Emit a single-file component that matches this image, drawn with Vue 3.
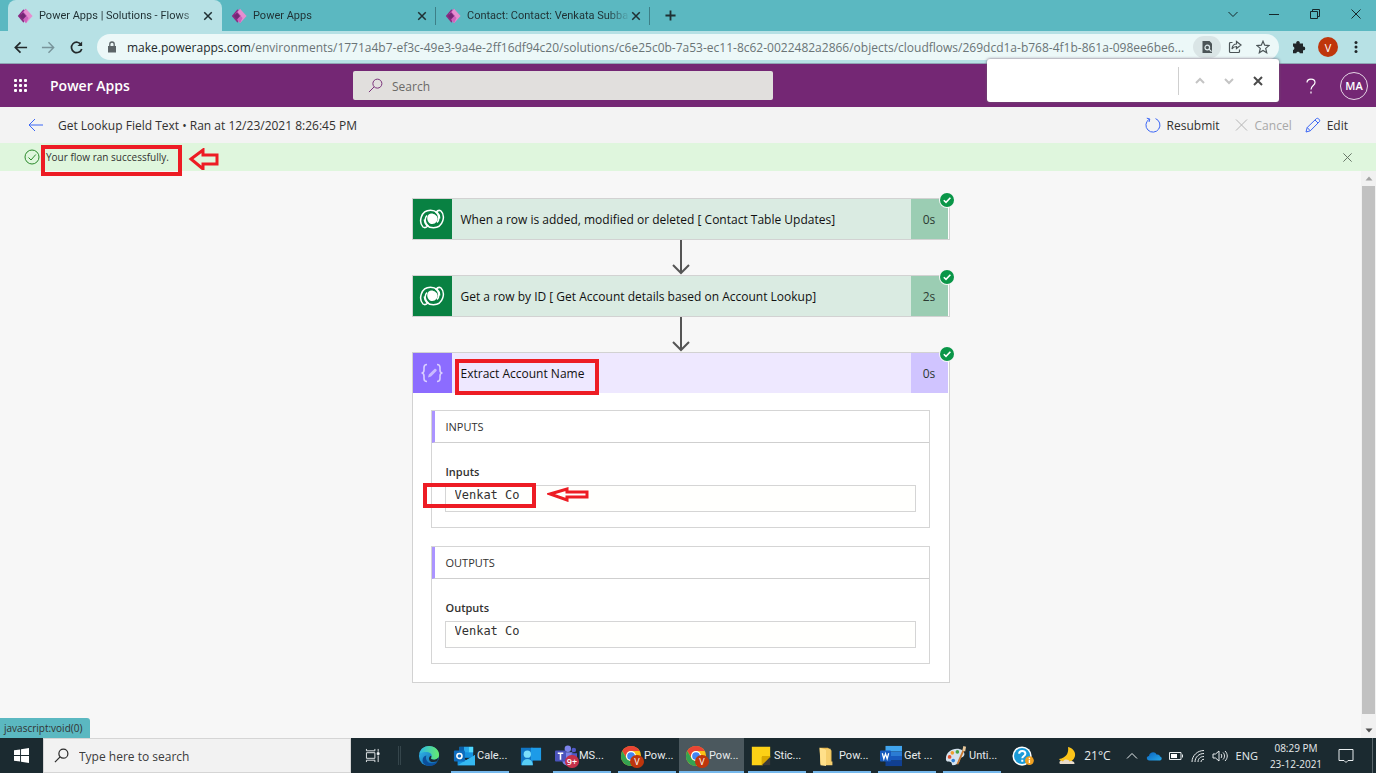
<script setup>
import { ref } from 'vue'

const tabs = [
    { title: 'Power Apps | Solutions - Flows', active: true },
    { title: 'Power Apps', active: false },
    { title: 'Contact: Contact: Venkata Subba', active: false }
]

const steps = [
    { title: 'When a row is added, modified or deleted [ Contact Table Updates]', time: '0s', kind: 'dataverse' },
    { title: 'Get a row by ID [ Get Account details based on Account Lookup]', time: '2s', kind: 'dataverse' },
    { title: 'Extract Account Name', time: '0s', kind: 'compose', open: true }
]

const panels = [
    { head: 'INPUTS', label: 'Inputs', id: 'inputs', value: ref('Venkat Co'), marked: true },
    { head: 'OUTPUTS', label: 'Outputs', id: 'outputs', value: ref('Venkat Co'), marked: false }
]

const apps = [
    { icon: 'edge', small: true },
    { icon: 'outlook', text: 'Cale...' },
    { icon: 'people', small: true },
    { icon: 'teams', text: 'MS...' },
    { icon: 'chrome', text: 'Pow...' },
    { icon: 'chrome', text: 'Pow...', active: true },
    { icon: 'sticky', text: 'Stic...' },
    { icon: 'folder', text: 'Pow...' },
    { icon: 'word', text: 'Get ...' },
    { icon: 'paint', text: 'Unti...' },
    { icon: 'help', small: true }
]

const search = ref('')
const find = ref('')
const taskSearch = ref('')
</script>

<template>
    <div class="screen">
        <svg class="sprite" aria-hidden="true">
            <defs>
                <linearGradient id="edgeA" x1="0" y1="0" x2="1" y2="1">
                    <stop offset="0" stop-color="#35c1f1" />
                    <stop offset="1" stop-color="#0c59a4" />
                </linearGradient>
                <linearGradient id="edgeB" x1="0" y1="0" x2="1" y2="0">
                    <stop offset="0" stop-color="#2cb8e6" />
                    <stop offset="1" stop-color="#66eb6e" />
                </linearGradient>
                <linearGradient id="cloudG" x1="0" y1="0" x2="1" y2="1">
                    <stop offset="0" stop-color="#0a64c0" />
                    <stop offset="1" stop-color="#28a8ea" />
                </linearGradient>
            </defs>
            <symbol id="powerapps" viewBox="0 0 16 16">
                <path d="M6.500 1.200L0.800 8l5.700 6.800L10 8z" fill="#8a2a83" />
                <path d="M8.500 0.800L4 6l4 4.500L11.500 5z" fill="#b94bb0" />
                <path d="M9 0.800L15.600 8 9 15.200 6.500 12 10 8 6.500 4z" fill="#e58fd0" />
                <path d="M8 6l3.500 4L9 15.200 5.500 10.500z" fill="#cf62bd" />
                <path d="M6 4.500L9.200 8 6 11.500 3 8z" fill="#742774" />
            </symbol>
            <symbol id="close" viewBox="0 0 16 16">
                <path d="M3 3l10 10M13 3L3 13" stroke="currentColor" fill="none" />
            </symbol>
            <symbol id="edge" viewBox="0 0 24 24">
                <circle cx="12" cy="12" r="11" fill="url(#edgeA)" />
                <path d="M1.500 9.500C3 4 7 1 12 1c6.500 0 11 4.500 11 9.500 0 3.500-2.600 5.500-5.500 5.500-2.200 0-3.500-.8-3.500-1.600 0-.6 1-.9 1-2.700C15 9.300 12.500 7.500 9 7.500c-3.200 0-5.800.7-7.500 2z" fill="url(#edgeB)" />
                <path d="M9.200 11.500c-1.700 4 1.300 8.500 6.300 8.500 2.400 0 4.500-.8 6-2-2 3.300-5.300 5-9 5C7.500 23 5 19.500 5 16.500c0-2.600 1.700-4.400 4.200-5z" fill="#0b4f9c" />
                <path d="M14 14.500c.3 1 1.600 1.500 3.500 1.500 1.800 0 3.600-.8 4.600-2.300-.2 1.800-.6 3-1.200 4.100-5 1.900-8.900.6-8.900-2.800 0-1.500.7-2.600 2-3.300 1.400 1 .1 2.100 0 2.800z" fill="#1c2b33" />
            </symbol>
            <symbol id="outlook" viewBox="0 0 24 24">
                <rect x="7" y="2" width="15" height="12" fill="#1490df" />
                <path d="M7 2h5v6H7z" fill="#0a5ea8" />
                <path d="M17 2h5v6h-5z" fill="#50d9ff" />
                <path d="M12 2h5v6h-5z" fill="#28a8ea" />
                <path d="M5 11l9.500 5.500L24 11v11H5z" fill="#1490df" />
                <path d="M5 22l19-11v11z" fill="#35b8f1" />
                <rect x="1" y="6" width="12" height="12" rx="1" fill="#0f6cbd" />
                <circle cx="7" cy="12" r="2.800" fill="none" stroke="#fff" stroke-width="1.700" />
            </symbol>
            <symbol id="people" viewBox="0 0 24 24">
                <path d="M1 3h13v19H1z" fill="#1176c4" />
                <path d="M12 3h11v14H12z" fill="#1d9be8" />
                <circle cx="8" cy="10" r="4" fill="#7ce0fb" />
                <path d="M2 22c0-9 12-9 12 0z" fill="#58cdf5" />
            </symbol>
            <symbol id="teams" viewBox="0 0 24 24">
                <circle cx="14" cy="4" r="3.500" fill="#7b83eb" />
                <circle cx="20.500" cy="5.500" r="2.500" fill="#5059c9" />
                <path d="M8 8h11v9c0 7-11 7-11 0z" fill="#7b83eb" />
                <path d="M18 9h6v7c0 4-6 4-6 0z" fill="#5059c9" />
                <rect x="0" y="6" width="12" height="12" rx="1" fill="#4b53bc" />
                <path d="M3 9h6M6 9v7" stroke="#fff" stroke-width="1.700" />
            </symbol>
            <symbol id="chrome" viewBox="0 0 24 24">
                <circle cx="12" cy="12" r="11" fill="#fbc116" />
                <path d="M2.500 6.500A11 11 0 0 1 21.500 6.500H12A5.500 5.500 0 0 0 7 14z" fill="#e94435" />
                <path d="M2.500 6.500A11 11 0 0 0 12 23l4.700-8.300A5.500 5.500 0 0 1 7.200 14.700z" fill="#34a351" />
                <circle cx="12" cy="12" r="5.500" fill="#fff" />
                <circle cx="12" cy="12" r="4.200" fill="#4285f4" />
            </symbol>
            <symbol id="sticky" viewBox="0 0 24 24">
                <path d="M2 2h20v12l-8 8H2z" fill="#fcd116" />
                <path d="M13 22v-9h9v9z" fill="#3b3a39" />
                <path d="M13 22l9-9v-1h-9z" fill="#d9a800" />
            </symbol>
            <symbol id="folder" viewBox="0 0 24 24">
                <path d="M5 3h9l4 3v15H6z" fill="#e9b94e" />
                <path d="M5 3l7 2v18l-6-1z" fill="#ffe08a" />
                <path d="M12 4h5v14h2v4h-7z" fill="#f6cf6e" />
            </symbol>
            <symbol id="word" viewBox="0 0 24 24">
                <path d="M6 1h18v6H6z" fill="#41a5ee" />
                <path d="M6 7h18v5H6z" fill="#2b7cd3" />
                <path d="M6 12h18v5H6z" fill="#185abd" />
                <path d="M6 17h18v6H6z" fill="#103f91" />
                <rect x="0" y="6" width="12" height="12" rx="1" fill="#185abd" />
                <path d="M2.500 9l1.700 6L6 9.500 7.800 15l1.700-6" stroke="#fff" stroke-width="1.400" fill="none" />
            </symbol>
            <symbol id="paint" viewBox="0 0 24 24">
                <path d="M1 15C1 8 7 4 13 4c5 0 9 3 8 7-.8 3-4 2-4.500 4.500C16 19 13 22 8.500 22c-1.500 0-.5-3-2.500-3.500S1 19 1 15z" fill="#d6e3ee" />
                <circle cx="5" cy="13" r="2" fill="#e2522f" />
                <circle cx="8" cy="8.500" r="2" fill="#f0a030" />
                <circle cx="13.500" cy="7.500" r="2" fill="#47a447" />
                <circle cx="9" cy="17" r="2" fill="#2f7fd6" />
                <path d="M21 4l-7.500 17" stroke="#c97a32" stroke-width="2" />
                <path d="M19 6l1-5 3 1-1 5z" fill="#e8c79b" />
            </symbol>
            <symbol id="help" viewBox="0 0 24 24">
                <circle cx="11" cy="12" r="10.500" fill="#fff" />
                <circle cx="11" cy="12" r="8.800" fill="#1a9ad7" />
                <path d="M7.800 9.500c0-4 6.800-4 6.800 0 0 2.500-3.400 2.500-3.400 5M11.200 16v2.300" stroke="#fff" stroke-width="2.200" fill="none" />
                <circle cx="19" cy="17" r="4.800" fill="#f0a020" />
                <path d="M19 14v1.300M19 16.200v3.300" stroke="#fff" stroke-width="1.500" />
            </symbol>
            <symbol id="dataverse" viewBox="0 0 26 20">
                <g fill="none" stroke="#fff" stroke-width="1.500">
                    <path id="swoosh" d="M8 6.500C5 9.500 6 14.500 9 16.800 7.500 18.500 5.500 19 4 18 -0.500 13.500 1.500 1.200 11.500 1.200 17 1.200 21 5 20.500 9.500" />
                    <use href="#swoosh" transform="rotate(180 13 10)" />
                </g>
                <path d="M8.300 8.500c.5-4.500 5-5 8.200-2.500 2.700 2 2.700 4.500 1.200 6.500-2 3-5.700 3.300-7.900 1-1.300-1.500-1.700-3.200-1.500-5z" fill="#fff" />
            </symbol>
            <symbol id="compose" viewBox="0 0 26 20">
                <path d="M8 1.500C5.500 1.500 5 2.500 5 4.500v2.500c0 2-1 3-2.500 3C4 10 5 11 5 13v2.500c0 2 .5 3 3 3M18 1.500c2.500 0 3 1 3 3V7c0 2 1 3 2.500 3C22 10 21 11 21 13v2.500c0 2-.5 3-3 3" fill="none" stroke="#d9ceff" stroke-width="1.600" />
                <path d="M9 14.500l.8-3 5.700-5.500c1-1 3 1 2 2L12 13.500z" fill="#c9bbff" />
            </symbol>
            <symbol id="tick" viewBox="0 0 16 16">
                <circle cx="8" cy="8" r="7" fill="#0a9648" />
                <path d="M4.800 8.200l2.200 2.200 4.400-4.600" stroke="#fff" stroke-width="1.600" fill="none" />
            </symbol>
        </svg>

        <!-- browser tabs -->
        <div class="tabbar">
            <div v-for="tab in tabs" :key="tab.title" class="tab" :class="{ active: tab.active }">
                <svg class="tab-icon"><use href="#powerapps" /></svg>
                <span class="tab-title">{{ tab.title }}</span>
                <button class="tab-close" aria-label="Close tab"><svg><use href="#close" /></svg></button>
            </div>
            <button class="new-tab" aria-label="New tab">
                <svg viewBox="0 0 12 12"><path d="M6 0.500v11M0.500 6h11" stroke="currentColor" stroke-width="2" /></svg>
            </button>
            <div class="window-buttons">
                <button aria-label="Tab search"><svg viewBox="0 0 12 12"><path d="M1.500 4L6 8.500 10.500 4" /></svg></button>
                <button aria-label="Minimise"><svg viewBox="0 0 12 12"><path d="M1 6.500h10" /></svg></button>
                <button aria-label="Restore"><svg viewBox="0 0 12 12"><path d="M1.500 3.500h7v7h-7zM3.500 3.500v-2h7v7h-2" /></svg></button>
                <button aria-label="Close"><svg viewBox="0 0 12 12"><path d="M1.500 1.500l9 9M10.500 1.500l-9 9" /></svg></button>
            </div>
        </div>

        <!-- address row -->
        <div class="toolbar">
            <button class="nav" aria-label="Back">
                <svg viewBox="0 0 16 16"><path d="M15 8H2.500M8 2.500L2.500 8 8 13.500" stroke-width="1.800" /></svg>
            </button>
            <button class="nav faded" aria-label="Forward">
                <svg viewBox="0 0 16 16"><path d="M1 8h12.500M8 2.500L13.500 8 8 13.500" stroke-width="1.500" /></svg>
            </button>
            <button class="nav" aria-label="Reload">
                <svg viewBox="0 0 16 16"><path d="M13 5A5.600 5.600 0 1 0 13.600 9.500" stroke-width="1.800" /><path d="M14 1.500v5H9z" fill="currentColor" stroke="none" /></svg>
            </button>
            <div class="address">
                <svg class="lock" viewBox="0 0 10 12"><path d="M1 5h8v6.500H1z" fill="#5c6568" /><path d="M2.800 5V3.200a2.200 2.200 0 0 1 4.400 0V5" fill="none" stroke="#5c6568" stroke-width="1.300" /></svg>
                <span class="url"><b>make.powerapps.com</b>/environments/1771a4b7-ef3c-49e3-9a4e-2ff16df94c20/solutions/c6e25c0b-7a53-ec11-8c62-0022482a2866/objects/cloudflows/269dcd1a-b768-4f1b-861a-098ee6be6...</span>
                <button class="pill" aria-label="Find">
                    <svg viewBox="0 0 14 14"><path d="M2.500 1h7L12 3.500V13H2.500z" fill="#4b5457" /><circle cx="7.300" cy="7.500" r="2.300" fill="none" stroke="#dce8ea" stroke-width="1.200" /><path d="M9 9.200l2.500 2.500" stroke="#dce8ea" stroke-width="1.200" /></svg>
                </button>
                <button class="mini" aria-label="Share">
                    <svg viewBox="0 0 14 14"><path d="M4.500 2.500H2.500a1 1 0 0 0-1 1V11.500a1 1 0 0 0 1 1h8a1 1 0 0 0 1-1V9.500M8.500 1.500l4.500 3.500-4.500 3.500v-2C6 6.500 5 7.500 4 9c.3-3 2-5 4.500-5z" fill="none" stroke="#4b5457" stroke-width="1.200" /></svg>
                </button>
                <button class="mini" aria-label="Bookmark">
                    <svg viewBox="0 0 14 14"><path d="M7 1.200l1.700 4 4.300.4-3.300 2.800 1 4.300L7 10.400l-3.700 2.300 1-4.300L1 5.600l4.300-.4z" fill="none" stroke="#4b5457" stroke-width="1.200" /></svg>
                </button>
            </div>
            <button class="ext" aria-label="Extensions">
                <svg viewBox="0 0 14 14"><path d="M1 3.500h3.300a1.800 1.800 0 1 1 3.400 0H11v3.200a1.800 1.800 0 1 1 0 3.500v3H7.800a1.800 1.800 0 0 0-3.500 0H1V10a1.800 1.800 0 0 0 0-3.500z" fill="#202629" /></svg>
            </button>
            <button class="profile">V</button>
            <button class="ext dots" aria-label="Menu">
                <svg viewBox="0 0 14 14"><g fill="#202629"><circle cx="7" cy="2.500" r="1.500" /><circle cx="7" cy="7" r="1.500" /><circle cx="7" cy="11.500" r="1.500" /></g></svg>
            </button>
            <div class="findbar">
                <input v-model="find" type="text" aria-label="Find in page">
                <button aria-label="Previous"><svg viewBox="0 0 12 12"><path d="M2 8l4-4 4 4" stroke="#c4c4c4" /></svg></button>
                <button aria-label="Next"><svg viewBox="0 0 12 12"><path d="M2 4l4 4 4-4" stroke="#c4c4c4" /></svg></button>
                <button aria-label="Close find"><svg viewBox="0 0 12 12"><path d="M2 2l8 8M10 2l-8 8" stroke="#4a4a4a" /></svg></button>
            </div>
        </div>

        <!-- Power Apps header -->
        <header class="app-header">
            <button class="waffle" aria-label="App launcher">
                <svg viewBox="0 0 14 14">
                    <g fill="#fff">
                        <template v-for="y in 3" :key="y">
                            <rect v-for="x in 3" :key="x" :x="x * 5 - 5" :y="y * 5 - 5" width="3" height="3" rx="1" />
                        </template>
                    </g>
                </svg>
            </button>
            <span class="brand">Power Apps</span>
            <label class="app-search">
                <svg viewBox="0 0 16 16"><circle cx="10" cy="6" r="4.800" /><path d="M6.500 9.500L1 15" /></svg>
                <input v-model="search" type="text" placeholder="Search">
            </label>
            <div class="app-right">
                <button class="question" aria-label="Help">
                    <svg viewBox="0 0 10 16"><path d="M1 4.500C1 0 9 0 9 4.500 9 7.500 5 7.500 5 11.500M5 13.500v2" fill="none" stroke="#fff" stroke-width="1.200" /></svg>
                </button>
                <button class="persona">MA</button>
            </div>
        </header>

        <div class="commands">
            <button class="go-back" aria-label="Go back">
                <svg viewBox="0 0 16 14"><path d="M15 7H1M7 1L1 7l6 6" fill="none" stroke="#3b66f5" /></svg>
            </button>
            <h1>Get Lookup Field Text • Ran at 12/23/2021 8:26:45 PM</h1>
            <div class="command-list">
                <button>
                    <svg viewBox="0 0 16 16"><path d="M10.500 1.600A7 7 0 1 1 4.200 2.200M1.800 1.200l3 .8-.8 3" stroke="#3b66f5" /></svg>
                    Resubmit
                </button>
                <button class="off" disabled>
                    <svg viewBox="0 0 16 16"><path d="M3 2.500l11 11M14 2.500l-11 11" stroke="#b5b5b5" /></svg>
                    Cancel
                </button>
                <button>
                    <svg viewBox="0 0 16 16"><path d="M1 15l1.200-4.500L11.500 1.500c1.300-1 4 1.500 3 3L5.300 13.800zM10 3l3 3M2.200 10.500l3.100 3.300" stroke="#3b66f5" /></svg>
                    Edit
                </button>
            </div>
        </div>

        <div class="success">
            <svg class="success-icon" viewBox="0 0 16 16"><circle cx="8" cy="8" r="7" /><path d="M4.500 8.500L7 11l4.800-5.500" /></svg>
            <p>
                Your flow ran successfully.
                <span class="mark mark-message"></span>
                <svg class="pointer pointer-message" viewBox="0 0 32 22"><path d="M3 11L15 2v5h14v9H15v5z" /></svg>
            </p>
            <button aria-label="Dismiss"><svg viewBox="0 0 12 12"><path d="M1.500 1.500l9 9M10.500 1.500l-9 9" stroke="#5d6b5d" fill="none" /></svg></button>
        </div>

        <main class="canvas">
            <div class="flow">
                <template v-for="(step, i) in steps" :key="step.title">
                    <svg v-if="i > 0" class="arrow" viewBox="0 0 20 35"><path d="M10 0v33M2 25l8 8 8-8" fill="none" stroke="#555" stroke-width="2" /></svg>
                    <section class="card" :class="step.kind">
                        <svg class="badge"><use href="#tick" /></svg>
                        <div class="card-head">
                            <span class="card-icon"><svg><use :href="'#' + step.kind" /></svg></span>
                            <h2>{{ step.title }}<span v-if="step.open" class="mark mark-title"></span></h2>
                            <span class="time">{{ step.time }}</span>
                        </div>
                        <div v-if="step.open" class="card-body">
                            <div v-for="panel in panels" :key="panel.id" class="panel">
                                <h3>{{ panel.head }}</h3>
                                <div class="panel-body">
                                    <label :for="panel.id">{{ panel.label }}</label>
                                    <div class="value">
                                        <input :id="panel.id" v-model="panel.value.value" type="text" readonly>
                                        <template v-if="panel.marked">
                                            <span class="mark mark-value"></span>
                                            <svg class="pointer pointer-value" viewBox="0 0 42 16"><path d="M3 8l17-5v3h20v5H20v3z" /></svg>
                                        </template>
                                    </div>
                                </div>
                            </div>
                        </div>
                    </section>
                </template>
            </div>
            <div class="scrollbar">
                <svg viewBox="0 0 14 14"><path d="M3.500 9L7 5l3.500 4z" fill="#a3a3a3" /></svg>
                <div class="thumb"></div>
                <svg viewBox="0 0 14 14"><path d="M3.500 5L7 9l3.500-4z" fill="#505050" /></svg>
            </div>
            <span class="status">javascript:void(0)</span>
        </main>

        <!-- Windows taskbar -->
        <footer class="taskbar">
            <button class="start" aria-label="Start">
                <svg viewBox="0 0 16 16"><path d="M0 2.500l6.500-1v6H0zM7.500 1.300L16 0v7.500H7.500zM0 8.500h6.500v6L0 13.500zM7.500 8.500H16V16l-8.500-1.300z" fill="#fff" /></svg>
            </button>
            <label class="task-search">
                <svg viewBox="0 0 16 16"><circle cx="10" cy="6" r="4.800" /><path d="M6.500 9.500L1 15" /></svg>
                <input v-model="taskSearch" type="text" placeholder="Type here to search">
            </label>
            <button class="task-view" aria-label="Task view">
                <svg viewBox="0 0 16 16"><path d="M1 1v2h9V1M1 15v-2h9v2M1 5h9v6H1zM13.500 1v3M13.500 8v7" /><path d="M12.500 5h2v2h-2z" fill="#fff" /></svg>
            </button>
            <span class="divider"></span>
            <button v-for="(app, i) in apps" :key="i" class="task" :class="{ small: app.small, active: app.active }" :aria-label="app.icon">
                <span class="task-icon">
                    <svg><use :href="'#' + app.icon" /></svg>
                    <i v-if="app.icon === 'teams'" class="count">9+</i>
                    <i v-if="app.icon === 'chrome'" class="who">V</i>
                </span>
                <span v-if="app.text" class="task-text">{{ app.text }}</span>
            </button>
            <div class="tray">
                <button class="weather">
                    <svg viewBox="0 0 20 20"><path d="M11 1c1 6-2 11-9 12 3 5 14 5 16-3 .8-4-2-8-7-9z" fill="#fcc419" /><path d="M3 18c-2-3 2-4 3-2.500 1-3 6-2.500 6.500 0 2-1 5-.5 5 2.500z" fill="#e9dccb" /></svg>
                    21°C
                </button>
                <button class="tray-icon" aria-label="Hidden icons"><svg viewBox="0 0 16 16"><path d="M3 10.500l5-5 5 5" /></svg></button>
                <button class="tray-icon" aria-label="OneDrive"><svg viewBox="0 0 16 16"><path d="M3.500 12.500C0 12.500 0 8 3 8c.5-4 6-5 7.500-1.500 2.500-.5 3.500 1 3.500 2 2.500.5 2 4 0 4z" fill="url(#cloudG)" stroke="none" /></svg></button>
                <button class="tray-icon" aria-label="Battery"><svg viewBox="0 0 16 16"><path d="M1.500 4.500h11.500v7H1.500zM14.500 6.500v3" /><path d="M3 6h6v4H3z" fill="#fff" stroke="none" /></svg></button>
                <button class="tray-icon" aria-label="Network"><svg viewBox="0 0 16 16"><path d="M2 14C2 7.500 7.500 2.500 14 2.500M5 14c0-5 4-8.500 9-8.500M8 14c0-3.500 2.500-5.500 6-5.500M11 14c0-2 1.500-2.700 3-2.700" /></svg></button>
                <button class="tray-icon" aria-label="Volume"><svg viewBox="0 0 16 16"><path d="M1 6h2.500L7 3v10L3.500 10H1zM9 6c1 1 1 3 0 4M11 4.500c2 2 2 5 0 7M13 3c3 3 3 7 0 10" /></svg></button>
                <span class="lang">ENG</span>
                <button class="clock">08:29 PM<br>23-12-2021</button>
                <button class="notes" aria-label="Notifications"><svg viewBox="0 0 16 16"><path d="M1 1.500h14v11H10L8 14.500l-2-2H1z" /></svg></button>
            </div>
        </footer>
    </div>
</template>

<style>
body {
    margin: 0;
    background: #fff;
}
</style>

<style scoped>
.screen {
    display: flex;
    flex-direction: column;
    min-height: 100vh;
    box-sizing: border-box;
    padding-bottom: 2px;
    font-family: "Open Sans", "Noto Sans", sans-serif;
    font-size: 12px;
    color: #323130;
}

.screen * {
    box-sizing: border-box;
}

.sprite {
    width: 0;
    height: 0;
    flex: none;
    display: block;
}

button {
    display: flex;
    align-items: center;
    justify-content: center;
    padding: 0;
    border: none;
    background: none;
    color: inherit;
    font: inherit;
    flex: none;
}

input {
    border: none;
    padding: 0;
    background: none;
    font: inherit;
    color: inherit;
    min-width: 0;
    outline: none;
}

svg {
    display: block;
    flex: none;
}

h1, h2, h3, p {
    margin: 0;
    font-weight: 400;
}

/* tabs */
.tabbar {
    display: flex;
    height: 31px;
    padding-left: 8px;
    background: #5bb8c1;
    color: #1f3033;
}

.tab {
    display: flex;
    align-items: center;
    width: 214px;
    padding: 0 8px 0 9px;
    position: relative;
}

.tab:not(.active)::after {
    content: "";
    position: absolute;
    right: 0;
    top: 7px;
    width: 1px;
    height: 18px;
    background: #3d7f87;
}

.tab.active {
    background: #b7e1e5;
    border-radius: 8px 8px 0 0;
}

.tab-icon {
    width: 16px;
    height: 16px;
}

.tab-title {
    flex: 1;
    margin-left: 6px;
    overflow: hidden;
    white-space: nowrap;
    font-family: Roboto, sans-serif;
    font-size: 11px;
    -webkit-mask-image: linear-gradient(90deg, #000 86%, transparent);
    mask-image: linear-gradient(90deg, #000 86%, transparent);
}

.tab-close svg {
    width: 12px;
    height: 12px;
    stroke-width: 2;
}

.new-tab {
    width: 40px;
}

.new-tab svg {
    width: 11px;
    height: 11px;
}

.window-buttons {
    display: flex;
    margin-left: auto;
}

.window-buttons button {
    width: 41px;
    height: 27px;
}

.window-buttons svg {
    width: 12px;
    height: 12px;
    fill: none;
    stroke: #16282b;
}

/* toolbar */
.toolbar {
    display: flex;
    align-items: center;
    height: 33px;
    padding: 0 6px;
    background: #b7e1e5;
    border-bottom: 1px solid #8fa5b4;
    position: relative;
}

.nav {
    width: 28px;
    color: #22292b;
}

.nav svg {
    width: 15px;
    height: 15px;
    fill: none;
    stroke: currentColor;
}

.nav.faded {
    color: #78949a;
}

.address {
    display: flex;
    align-items: center;
    flex: 1;
    min-width: 0;
    height: 26px;
    margin: 0 6px 0 7px;
    padding: 0 2px 0 10px;
    border-radius: 13px;
    background: #ecf8f8;
}

.lock {
    width: 10px;
    height: 12px;
    margin-right: 10px;
}

.url {
    flex: 1;
    min-width: 0;
    overflow: hidden;
    white-space: nowrap;
    font-size: 12px;
    color: #6a7476;
}

.url b {
    font-weight: 400;
    color: #22292b;
}

.pill {
    width: 28px;
    height: 22px;
    border-radius: 11px;
    background: #dae5e6;
}

.mini {
    width: 28px;
}

.pill svg, .mini svg {
    width: 14px;
    height: 14px;
}

.ext {
    width: 28px;
}

.ext svg {
    width: 14px;
    height: 14px;
}

.profile {
    width: 20px;
    height: 20px;
    margin: 0 4px 0 5px;
    border-radius: 50%;
    background: #bf360c;
    color: #fff;
    font-size: 11px;
}

.findbar {
    position: absolute;
    right: 97px;
    top: 28px;
    z-index: 2;
    display: flex;
    align-items: center;
    width: 292px;
    height: 43px;
    padding-right: 7px;
    border-radius: 3px;
    background: #fff;
    box-shadow: 0 0 3px #6b5a70;
}

.findbar input {
    flex: 1;
    height: 28px;
    margin-right: 6px;
    padding-left: 12px;
    border-right: 1px solid #cfcfcf;
}

.findbar button {
    width: 29px;
}

.findbar svg {
    width: 12px;
    height: 12px;
    fill: none;
    stroke-width: 2;
}

/* app header */
.app-header {
    display: flex;
    align-items: center;
    height: 43px;
    padding: 0 8px 0 14px;
    background: #742774;
    color: #fff;
}

.waffle svg {
    width: 14px;
    height: 14px;
}

.brand {
    width: 303px;
    margin-left: 22px;
    font-size: 14px;
    font-weight: 600;
}

.app-search {
    display: flex;
    align-items: center;
    width: 420px;
    height: 29px;
    padding: 0 15px;
    border-radius: 2px;
    background: #e1dfdd;
    color: #605e5c;
}

.app-search svg {
    width: 15px;
    height: 15px;
    margin-right: 9px;
    fill: none;
    stroke: #742774;
}

.app-search input {
    flex: 1;
    padding-top: 1px;
}

.app-search input::placeholder {
    color: #6b6967;
    opacity: 1;
}

.app-right {
    display: flex;
    align-items: center;
    gap: 24px;
    margin-left: auto;
}

.question svg {
    width: 10px;
    height: 16px;
}

.persona {
    width: 28px;
    height: 28px;
    border: 1px solid #e5d6e5;
    border-radius: 50%;
    font-size: 11px;
    font-weight: 600;
}

/* command row */
.commands {
    display: flex;
    align-items: center;
    height: 36px;
    padding: 0 28px;
    background: #f3f3f3;
}

.go-back svg {
    width: 16px;
    height: 14px;
}

.commands h1 {
    margin-left: 14px;
    font-size: 12px;
}

.command-list {
    display: flex;
    gap: 13px;
    margin-left: auto;
}

.command-list button {
    gap: 6px;
}

.command-list svg {
    width: 16px;
    height: 16px;
    fill: none;
}

.command-list .off {
    color: #a8a8a8;
}

.success {
    display: flex;
    align-items: center;
    height: 28px;
    padding: 0 23px 0 24px;
    background: #dff6dd;
}

.success-icon {
    width: 16px;
    height: 16px;
    fill: none;
    stroke: #2c8a2c;
}

.success p {
    position: relative;
    z-index: 1;
    margin-left: 6px;
    font-size: 10px;
    line-height: 16px;
}

.success button {
    margin-left: auto;
}

.success button svg {
    width: 11px;
    height: 11px;
}

/* red markers lie over the content */
.mark {
    position: absolute;
    border: 4px solid #ed1c24;
}

.pointer {
    position: absolute;
    fill: none;
    stroke: #ed1c24;
    stroke-width: 3;
}

.mark-message {
    left: -5px;
    top: -4px;
    width: 141px;
    height: 31px;
}

.pointer-message {
    left: 142px;
    top: -1px;
    width: 32px;
    height: 22px;
}

.mark-title {
    left: 3px;
    top: 6px;
    width: 144px;
    height: 36px;
}

.mark-value {
    left: -22px;
    top: -2px;
    width: 113px;
    height: 25px;
}

.pointer-value {
    left: 102px;
    top: 1px;
    width: 42px;
    height: 16px;
}

/* flow canvas */
.canvas {
    display: flex;
    flex: 1;
    position: relative;
    background: #f7f7f7;
}

.flow {
    flex: 1;
    display: flex;
    flex-direction: column;
    align-items: center;
    padding: 27px 0 48px;
}

.card {
    position: relative;
    width: 538px;
    border: 1px solid #d2d2d2;
    background: #fff;
}

.badge {
    position: absolute;
    right: -6px;
    top: -7px;
    width: 16px;
    height: 16px;
    border-radius: 50%;
    background: #f7f7f7;
}

.card-head {
    display: flex;
    height: 40px;
    padding-right: 1px;
    line-height: 42px;
    color: #111;
}

.card-icon {
    display: flex;
    align-items: center;
    justify-content: center;
    width: 39px;
    background: #088142;
}

.card-icon svg {
    width: 26px;
    height: 20px;
}

.card-head h2 {
    flex: 1;
    position: relative;
    padding-left: 9px;
    font-size: 12px;
    background: #daebe2;
}

.time {
    width: 37px;
    text-align: center;
    color: #2b3a32;
    background: #9bcdb3;
}

.card-head h2, .time {
    height: 40px;
}

.compose .card-icon {
    background: #8c6cff;
}

.compose h2 {
    background: #eee8ff;
}

.compose .time {
    background: #d0c4ff;
}

.arrow {
    width: 20px;
    height: 35px;
}

.card-body {
    display: flex;
    flex-direction: column;
    gap: 18px;
    padding: 17px 19px 18px 18px;
}

.panel {
    border: 1px solid #d5d5d5;
}

.panel h3 {
    height: 32px;
    padding-left: 11px;
    border-bottom: 1px solid #cfcfcf;
    border-left: 3px solid #ab94ff;
    font-size: 11px;
    line-height: 31px;
}

.panel-body {
    padding: 20px 13px 15px;
}

.panel label {
    display: block;
    height: 22px;
    padding-left: 1px;
    font-size: 11px;
    font-weight: 600;
    line-height: 18px;
}

.value {
    position: relative;
}

.value input {
    display: block;
    width: 100%;
    height: 27px;
    padding: 0 9px 8px;
    border: 1px solid #d5d5d5;
    background: #fffffd;
    font-family: "DejaVu Sans Mono", monospace;
    font-size: 12px;
}

.scrollbar {
    display: flex;
    flex-direction: column;
    align-items: center;
    width: 15px;
    background: #f1f1f1;
}

.scrollbar svg {
    width: 14px;
    height: 15px;
}

.thumb {
    flex: 1;
    width: 13px;
    margin-bottom: 9px;
    background: #c1c1c1;
}

.status {
    position: absolute;
    left: 0;
    bottom: 0;
    height: 20px;
    padding: 0 8px 0 4px;
    border-radius: 0 3px 0 0;
    background: #5bb8c1;
    font-size: 10px;
    line-height: 20px;
}

/* taskbar */
.taskbar {
    display: flex;
    height: 35px;
    background: #1b2a30;
    color: #e8ecee;
}

.start {
    width: 43px;
}

.start svg {
    width: 15px;
    height: 15px;
}

.task-search {
    display: flex;
    align-items: center;
    width: 308px;
    padding: 0 10px;
    border: 1px solid #d5d5d5;
    background: #f2f2f2;
    color: #3b3b3b;
}

.task-search svg {
    width: 15px;
    height: 15px;
    margin-right: 10px;
    fill: none;
    stroke: #2b2b2b;
    stroke-width: 1.3;
}

.task-search input {
    flex: 1;
    padding-top: 1px;
}

.task-search input::placeholder {
    color: #3b3b3b;
    opacity: 1;
}

.task-view {
    width: 43px;
}

.task-view svg {
    width: 16px;
    height: 15px;
    fill: none;
    stroke: #e8ecee;
}

.divider {
    width: 3px;
    margin: 8px 9px 8px 4px;
    border: 1px solid #35454b;
    border-width: 0 1px;
}

.task {
    position: relative;
    width: 65px;
    justify-content: flex-start;
    padding-left: 6px;
}

.task::after {
    content: "";
    position: absolute;
    left: 4px;
    right: 3px;
    bottom: 0;
    height: 2px;
    background: #76b9ed;
}

.task.small {
    width: 37px;
    justify-content: center;
    padding: 0;
}

.task.small::after {
    display: none;
}

.task.active {
    background: #4b585e;
}

.task.active::after {
    left: 0;
    right: 0;
}

.task-icon {
    position: relative;
}

.task-icon svg {
    width: 22px;
    height: 22px;
}

.task-text {
    margin-left: 2px;
    font-family: Roboto, sans-serif;
    font-size: 11px;
    white-space: nowrap;
}

.count, .who {
    position: absolute;
    right: -2px;
    bottom: -1px;
    width: 14px;
    height: 13px;
    border-radius: 7px;
    background: #c4314b;
    color: #fff;
    font-size: 9px;
    font-style: normal;
    font-weight: 600;
    line-height: 13px;
    text-align: center;
}

.who {
    background: #bf360c;
    font-weight: 400;
}

.tray {
    display: flex;
    align-items: center;
    margin-left: auto;
    margin-right: 3px;
    padding-right: 18px;
    border-right: 1px solid #5a666b;
}

.weather {
    gap: 7px;
    margin-right: 10px;
}

.weather svg {
    width: 20px;
    height: 20px;
}

.tray-icon {
    width: 22px;
}

.tray-icon svg, .notes svg {
    width: 16px;
    height: 16px;
    fill: none;
    stroke: #e8ecee;
}

.lang {
    margin-left: 5px;
    font-size: 11px;
}

.clock {
    width: 76px;
    font-size: 10px;
    line-height: 16px;
}

.notes {
    margin-left: 4px;
}
</style>
